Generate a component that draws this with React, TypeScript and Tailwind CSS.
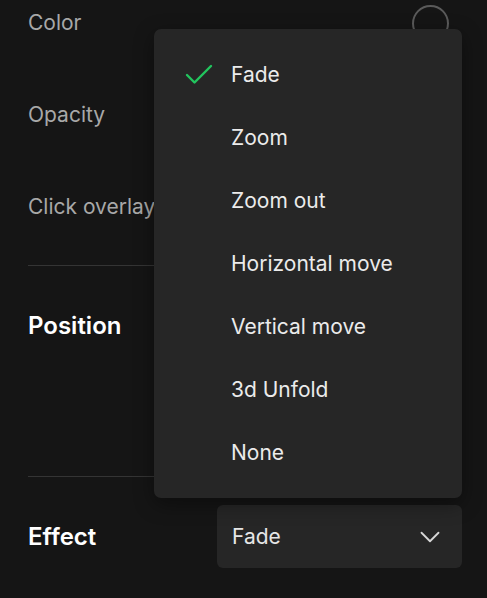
import { Check, ChevronDown } from "lucide-react";

const effects = ["Fade", "Zoom", "Zoom out", "Horizontal move", "Vertical move", "3d Unfold", "None"];

function Label({ children }: { children: React.ReactNode }) {
  return <span className="text-[21px] text-[#a8a8a8]">{children}</span>;
}

export default function App() {
  const selected = "Fade";

  return (
    <div
      className="relative h-[598px] w-[487px] overflow-hidden bg-[#151515] pl-[28px] pr-[25px] [font-family:Inter,'Noto_Sans',sans-serif]"
    >
      {/* Overlay settings */}
      <div className="flex h-[46px] items-center justify-between">
        <Label>Color</Label>
        <div className="mr-[13px] h-[37px] w-[37px] rounded-full border-2 border-[#5a5a5a]" />
      </div>
      <div className="mt-[46px] flex h-[46px] items-center">
        <Label>Opacity</Label>
      </div>
      <div className="mt-[46px] flex h-[46px] items-center">
        <Label>Click overlay</Label>
      </div>

      <div className="mt-[35px] h-px bg-[#343434]" />

      {/* Position */}
      <div className="flex h-[210px] items-start pt-[44px]">
        <span className="text-[24px] font-semibold leading-[32px] text-white">Position</span>
      </div>

      <div className="h-px bg-[#343434]" />

      {/* Effect */}
      <div className="mt-[28px] flex items-center justify-between">
        <span className="text-[24px] font-semibold text-white">Effect</span>
        <button className="flex h-[63px] w-[245px] items-center justify-between rounded-[6px] bg-[#262626] pl-[15px] pr-[15px] text-[21px] text-[#e6e6e6]">
          {selected}
          <ChevronDown className="h-[34px] w-[34px] text-[#d6d6d6]" strokeWidth={1.3} />
        </button>
      </div>

      {/* Effect dropdown menu */}
      <div className="absolute left-[154px] top-[29px] w-[308px] rounded-[7px] bg-[#262626] py-[14px] shadow-[0_6px_20px_rgba(0,0,0,0.4)]">
        {effects.map((effect) => (
          <div key={effect} className="flex h-[63px] items-center pl-[27px]">
            <span className="flex w-[50px] items-center">
              {effect === selected && <Check className="h-[36px] w-[36px] text-[#22c55e]" strokeWidth={1.6} />}
            </span>
            <span className="text-[21px] text-[#ebebeb]">{effect}</span>
          </div>
        ))}
      </div>
    </div>
  );
}
